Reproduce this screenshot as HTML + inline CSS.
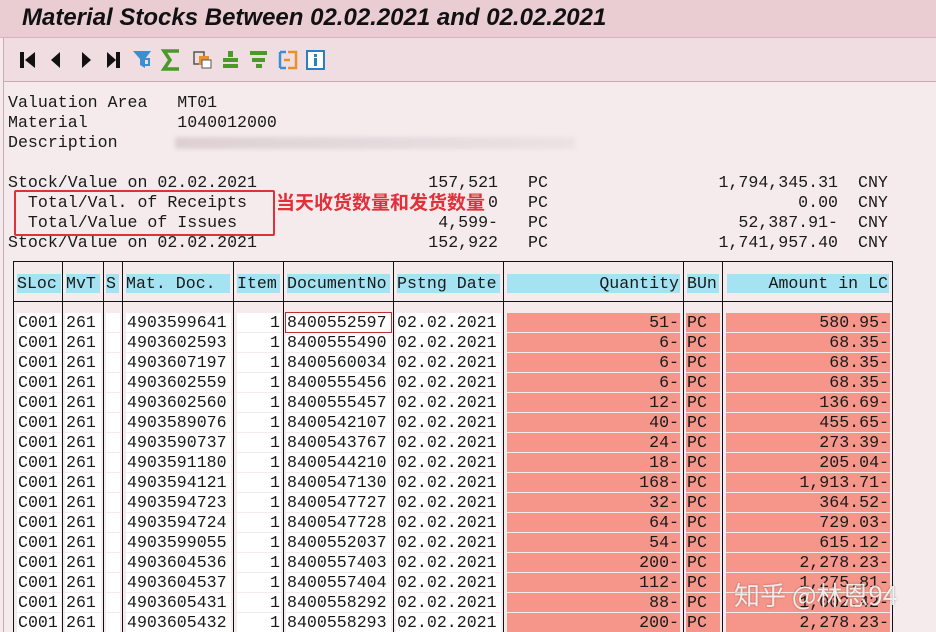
<!DOCTYPE html>
<html><head><meta charset="utf-8"><style>
*{margin:0;padding:0;box-sizing:border-box}
body{width:936px;height:632px;overflow:hidden;background:#f5ebed;position:relative;font-family:"Liberation Mono","Noto Sans CJK SC",monospace;font-size:16.6px;color:#1a1a1a}
.t{position:absolute;white-space:pre;line-height:20px}
#title{position:absolute;left:0;top:0;width:936px;height:38px;background:#e9cdd3;border-bottom:1px solid #d9b3bb}
#title span{position:absolute;left:22px;top:4px;font:italic bold 24px "Liberation Sans",sans-serif;color:#111}
#tb{position:absolute;left:3px;top:38px;width:933px;height:44px;background:#efdde1;border-bottom:1px solid #c9aab1;border-left:1px solid #c9aab1}
.vl{position:absolute;top:261px;width:1px;height:371px;background:#111}
.hl{position:absolute;left:13px;width:880px;height:1px;background:#111}
.h{position:absolute;top:274px;height:19px;background:#a6e3f2;line-height:19px;white-space:pre}
.r{position:absolute;left:0;width:936px;height:19px;line-height:19px}
.r div{position:absolute;top:0;height:19px;white-space:pre;padding:0 1px}
.w{background:#fff}.p{background:#f6968a}
.c1{left:17px;width:44px}.c2{left:65px;width:36px}.c3{left:106px;width:14px}.c4{left:126px;width:105px}
.c5{left:237px;width:44px;text-align:right}.c6{left:286px;width:105px}.c7{left:396px;width:105px}
.c8{left:507px;width:173px;text-align:right}.c9{left:686px;width:34px}.c10{left:726px;width:164px;text-align:right}
</style></head><body>
<div id="title"><span>Material Stocks Between 02.02.2021 and 02.02.2021</span></div>
<div id="tb">
<svg width="340" height="44" style="position:absolute;left:0;top:0">
<g fill="#111"><rect x="16" y="14" width="4" height="16"/><path d="M31 14v16l-10-8z"/>
<path d="M56 14v16l-9-8z"/>
<path d="M78 14v16l9-8z"/>
<path d="M103 14v16l9-8z"/><rect x="112" y="14" width="4" height="16"/></g>
<path d="M129 13h18l-6 8v9l-5-3v-6z" fill="#3a8fd0"/><path d="M140 21h5v6h-5" fill="none" stroke="#3a8fd0" stroke-width="2"/>
<path d="M175 13h-15l6 9-6 9h15" fill="none" stroke="#4a9a2a" stroke-width="3.5"/>
<rect x="190" y="14" width="10" height="12" fill="none" stroke="#555" stroke-width="1.5"/><rect x="195" y="18" width="10" height="9" fill="#e8902a"/><rect x="198" y="22" width="9" height="8" fill="#fff" stroke="#555"/>
<rect x="224" y="13" width="5" height="6" fill="#4a9a2a"/><rect x="219" y="20" width="15" height="4" fill="#4a9a2a"/><rect x="219" y="26" width="15" height="4" fill="#4a9a2a"/>
<rect x="246" y="13" width="17" height="4" fill="#4a9a2a"/><rect x="248" y="20" width="13" height="4" fill="#4a9a2a"/><rect x="252" y="26" width="6" height="4" fill="#4a9a2a"/>
<path d="M276 14v16M276 14h6M276 30h6" stroke="#3a8fd0" stroke-width="2.5" fill="none"/><path d="M284 14h8v16h-8M280 22h6" stroke="#e8902a" stroke-width="2.5" fill="none"/>
<rect x="303" y="13" width="17" height="18" fill="#fff" stroke="#2a7fc0" stroke-width="2"/><rect x="310" y="16" width="3" height="3" fill="#2a7fc0"/><rect x="310" y="20" width="3" height="8" fill="#2a7fc0"/>
</svg></div>
<div style="position:absolute;left:3px;top:82px;width:1px;height:550px;background:#c9aab1"></div>

<div class="t" style="left:8px;top:93px">Valuation Area   MT01
Material         1040012000
Description</div>
<div style="position:absolute;left:175px;top:137px;width:400px;height:12px;background:linear-gradient(90deg,#ddd0d3,#e4d9dc,#ece2e4);filter:blur(2px)"></div>

<div class="t" style="left:8px;top:173px">Stock/Value on 02.02.2021
  Total/Val. of Receipts
  Total/Value of Issues
Stock/Value on 02.02.2021</div>
<div class="t" style="left:408px;top:173px;text-align:right;width:90px">157,521
      0
 4,599-
152,922</div>
<div class="t" style="left:528px;top:173px">PC
PC
PC
PC</div>
<div class="t" style="left:698px;top:173px;text-align:right;width:140px">1,794,345.31
0.00
52,387.91-
1,741,957.40</div>
<div class="t" style="left:858px;top:173px">CNY
CNY
CNY
CNY</div>
<div style="position:absolute;left:14px;top:190px;width:261px;height:46px;border:2.5px solid #e0303a;border-radius:2px"></div>
<div style="position:absolute;left:276px;top:190px;font:bold 19px 'Noto Sans CJK SC',sans-serif;color:#e0303a;line-height:24px;white-space:pre">当天收货数量和发货数量</div>

<div class="hl" style="top:261px"></div><div class="hl" style="top:301px"></div>
<div class="vl" style="left:13px"></div><div class="vl" style="left:62px"></div><div class="vl" style="left:103px"></div><div class="vl" style="left:122px"></div><div class="vl" style="left:233px"></div><div class="vl" style="left:283px"></div><div class="vl" style="left:393px"></div><div class="vl" style="left:503px"></div><div class="vl" style="left:683px"></div><div class="vl" style="left:722px"></div><div class="vl" style="left:892px"></div>

<div class="h" style="left:17px;width:44px">SLoc</div>
<div class="h" style="left:66px;width:34px">MvT</div>
<div class="h" style="left:106px;width:13px">S</div>
<div class="h" style="left:126px;width:104px">Mat. Doc.</div>
<div class="h" style="left:237px;width:43px">Item</div>
<div class="h" style="left:287px;width:103px">DocumentNo</div>
<div class="h" style="left:397px;width:103px">Pstng Date</div>
<div class="h" style="left:507px;width:173px;text-align:right;padding-right:1px">Quantity</div>
<div class="h" style="left:687px;width:32px">BUn</div>
<div class="h" style="left:727px;width:162px;text-align:right;padding-right:1px">Amount in LC</div>

<div class="r" style="top:313px"><div class="c1 w">C001</div><div class="c2 w">261</div><div class="c3 w"></div><div class="c4 w">4903599641</div><div class="c5 w">1</div><div class="c6 w" style="outline:1px solid #c03030">8400552597</div><div class="c7 w">02.02.2021</div><div class="c8 p">51-</div><div class="c9 p">PC</div><div class="c10 p">580.95-</div></div>
<div class="r" style="top:333px"><div class="c1 w">C001</div><div class="c2 w">261</div><div class="c3 w"></div><div class="c4 w">4903602593</div><div class="c5 w">1</div><div class="c6 w">8400555490</div><div class="c7 w">02.02.2021</div><div class="c8 p">6-</div><div class="c9 p">PC</div><div class="c10 p">68.35-</div></div>
<div class="r" style="top:353px"><div class="c1 w">C001</div><div class="c2 w">261</div><div class="c3 w"></div><div class="c4 w">4903607197</div><div class="c5 w">1</div><div class="c6 w">8400560034</div><div class="c7 w">02.02.2021</div><div class="c8 p">6-</div><div class="c9 p">PC</div><div class="c10 p">68.35-</div></div>
<div class="r" style="top:373px"><div class="c1 w">C001</div><div class="c2 w">261</div><div class="c3 w"></div><div class="c4 w">4903602559</div><div class="c5 w">1</div><div class="c6 w">8400555456</div><div class="c7 w">02.02.2021</div><div class="c8 p">6-</div><div class="c9 p">PC</div><div class="c10 p">68.35-</div></div>
<div class="r" style="top:393px"><div class="c1 w">C001</div><div class="c2 w">261</div><div class="c3 w"></div><div class="c4 w">4903602560</div><div class="c5 w">1</div><div class="c6 w">8400555457</div><div class="c7 w">02.02.2021</div><div class="c8 p">12-</div><div class="c9 p">PC</div><div class="c10 p">136.69-</div></div>
<div class="r" style="top:413px"><div class="c1 w">C001</div><div class="c2 w">261</div><div class="c3 w"></div><div class="c4 w">4903589076</div><div class="c5 w">1</div><div class="c6 w">8400542107</div><div class="c7 w">02.02.2021</div><div class="c8 p">40-</div><div class="c9 p">PC</div><div class="c10 p">455.65-</div></div>
<div class="r" style="top:433px"><div class="c1 w">C001</div><div class="c2 w">261</div><div class="c3 w"></div><div class="c4 w">4903590737</div><div class="c5 w">1</div><div class="c6 w">8400543767</div><div class="c7 w">02.02.2021</div><div class="c8 p">24-</div><div class="c9 p">PC</div><div class="c10 p">273.39-</div></div>
<div class="r" style="top:453px"><div class="c1 w">C001</div><div class="c2 w">261</div><div class="c3 w"></div><div class="c4 w">4903591180</div><div class="c5 w">1</div><div class="c6 w">8400544210</div><div class="c7 w">02.02.2021</div><div class="c8 p">18-</div><div class="c9 p">PC</div><div class="c10 p">205.04-</div></div>
<div class="r" style="top:473px"><div class="c1 w">C001</div><div class="c2 w">261</div><div class="c3 w"></div><div class="c4 w">4903594121</div><div class="c5 w">1</div><div class="c6 w">8400547130</div><div class="c7 w">02.02.2021</div><div class="c8 p">168-</div><div class="c9 p">PC</div><div class="c10 p">1,913.71-</div></div>
<div class="r" style="top:493px"><div class="c1 w">C001</div><div class="c2 w">261</div><div class="c3 w"></div><div class="c4 w">4903594723</div><div class="c5 w">1</div><div class="c6 w">8400547727</div><div class="c7 w">02.02.2021</div><div class="c8 p">32-</div><div class="c9 p">PC</div><div class="c10 p">364.52-</div></div>
<div class="r" style="top:513px"><div class="c1 w">C001</div><div class="c2 w">261</div><div class="c3 w"></div><div class="c4 w">4903594724</div><div class="c5 w">1</div><div class="c6 w">8400547728</div><div class="c7 w">02.02.2021</div><div class="c8 p">64-</div><div class="c9 p">PC</div><div class="c10 p">729.03-</div></div>
<div class="r" style="top:533px"><div class="c1 w">C001</div><div class="c2 w">261</div><div class="c3 w"></div><div class="c4 w">4903599055</div><div class="c5 w">1</div><div class="c6 w">8400552037</div><div class="c7 w">02.02.2021</div><div class="c8 p">54-</div><div class="c9 p">PC</div><div class="c10 p">615.12-</div></div>
<div class="r" style="top:553px"><div class="c1 w">C001</div><div class="c2 w">261</div><div class="c3 w"></div><div class="c4 w">4903604536</div><div class="c5 w">1</div><div class="c6 w">8400557403</div><div class="c7 w">02.02.2021</div><div class="c8 p">200-</div><div class="c9 p">PC</div><div class="c10 p">2,278.23-</div></div>
<div class="r" style="top:573px"><div class="c1 w">C001</div><div class="c2 w">261</div><div class="c3 w"></div><div class="c4 w">4903604537</div><div class="c5 w">1</div><div class="c6 w">8400557404</div><div class="c7 w">02.02.2021</div><div class="c8 p">112-</div><div class="c9 p">PC</div><div class="c10 p">1,275.81-</div></div>
<div class="r" style="top:593px"><div class="c1 w">C001</div><div class="c2 w">261</div><div class="c3 w"></div><div class="c4 w">4903605431</div><div class="c5 w">1</div><div class="c6 w">8400558292</div><div class="c7 w">02.02.2021</div><div class="c8 p">88-</div><div class="c9 p">PC</div><div class="c10 p">1,002.42-</div></div>
<div class="r" style="top:613px"><div class="c1 w">C001</div><div class="c2 w">261</div><div class="c3 w"></div><div class="c4 w">4903605432</div><div class="c5 w">1</div><div class="c6 w">8400558293</div><div class="c7 w">02.02.2021</div><div class="c8 p">200-</div><div class="c9 p">PC</div><div class="c10 p">2,278.23-</div></div>

<div style="position:absolute;left:734px;top:576px;font:26px 'Noto Sans CJK SC',sans-serif;color:rgba(255,255,255,0.85);text-shadow:0 0 2px rgba(0,0,0,0.35);white-space:pre">知乎 @林恩94</div>
</body></html>
